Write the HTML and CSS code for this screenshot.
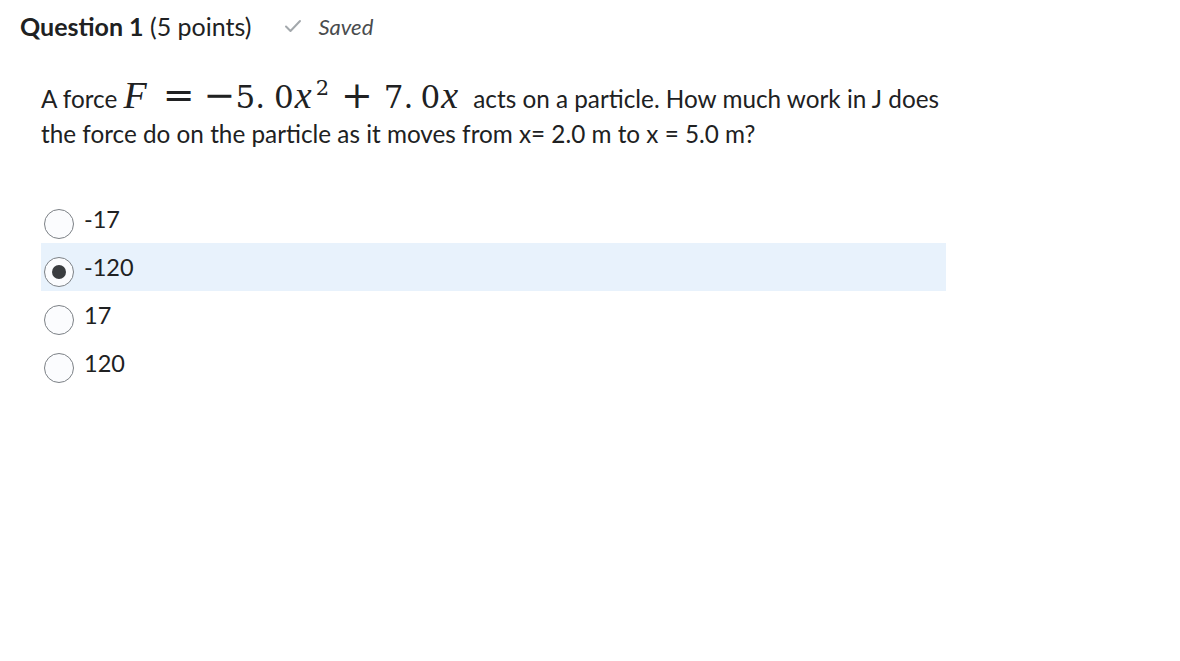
FILE: index.html
```html
<!DOCTYPE html>
<html>
<head>
<meta charset="utf-8">
<link rel="stylesheet" href="styles.css">
</head>
<body>
<div class="page">
  <div class="header">
    <h2 class="title"><strong>Question 1</strong> <span class="pts">(5 points)</span></h2>
    <span class="saved">
      <svg class="check" width="18" height="16" viewBox="0 0 18 16"><path d="M2 8.5 L6.5 13 L16 3" fill="none" stroke="#a3a8ac" stroke-width="2" stroke-linecap="round" stroke-linejoin="round"/></svg>
      <em>Saved</em>
    </span>
  </div>
  <div class="question">
    <p class="qtext">A force <span class="math"><i class="mi">F</i><span class="rel">=</span><span class="mo">−</span><span class="mn">5.</span><span class="mn gap1">0</span><i class="mi vx">x</i><sup>2</sup><span class="bin">+</span><span class="mn">7.</span><span class="mn gap2">0</span><i class="mi vx last">x</i></span> acts on a particle. How much work in J does the force do on the particle as it moves from x= 2.0 m to x = 5.0 m?</p>
  </div>
  <div class="options">
    <label class="opt"><span class="radio"></span><span class="lbl">-17</span></label>
    <label class="opt selected"><span class="radio on"></span><span class="lbl">-120</span></label>
    <label class="opt"><span class="radio"></span><span class="lbl">17</span></label>
    <label class="opt"><span class="radio"></span><span class="lbl">120</span></label>
  </div>
</div>
</body>
</html>
```

FILE: styles.css
```css
html, body { margin: 0; padding: 0; background: #fff; }
body { font-family: Lato, "Open Sans", sans-serif; color: #202122; }
.page { padding: 8px 0 0 20px; }
.header { display: flex; align-items: center; gap: 33px; height: 36px; }
.title { margin: 0; font-size: 25px; font-weight: 400; color: #202122; }
.title strong { font-weight: 700; }
.saved { display: flex; align-items: center; gap: 16px; color: #494c4e; font-size: 22px; }
.saved em { font-style: italic; }
.question { padding: 37px 0 0 21px; width: 905px; }
.qtext { margin: 0; font-size: 24.3px; line-height: 35px; color: #202122; }
.math { font-family: "DejaVu Serif", "Liberation Serif", serif; font-size: 31px; line-height: 0; white-space: nowrap; }
.math .mi { font-family: "Liberation Serif", serif; font-style: italic; font-size: 38px; }
.math .vx { margin-left: 1px; margin-right: 4px; }
.math .vx.last { margin-right: 9px; }
.math .rel { font-size: 38px; margin: 0 9px 0 16px; }
.math .mo { font-size: 38px; margin-right: 0; }
.math .gap1 { margin-left: 9px; }
.math .gap2 { margin-left: 7px; }
.math .bin { font-size: 38px; margin: 0 11px 0 12px; }
.math sup { font-size: 21px; line-height: 0; vertical-align: 13px; }
.options { display: flex; flex-direction: column; padding: 44px 0 0 0; width: 905px; margin-left: 21px; }
.opt { display: flex; align-items: center; gap: 10px; height: 48px; padding-left: 3px; font-size: 23.5px; }
.opt.selected { background: #e8f2fc; }
.radio { width: 30px; height: 30px; margin-top: 10px; border: 1.5px solid #7c8186; border-radius: 50%; background: #fbfcfe; box-sizing: border-box; position: relative; flex: none; }
.radio.on::after { content: ""; position: absolute; left: 50%; top: 50%; width: 14px; height: 14px; margin: -7px 0 0 -7px; background: #3a3d40; border-radius: 50%; }
.lbl { color: #202122; }
```
